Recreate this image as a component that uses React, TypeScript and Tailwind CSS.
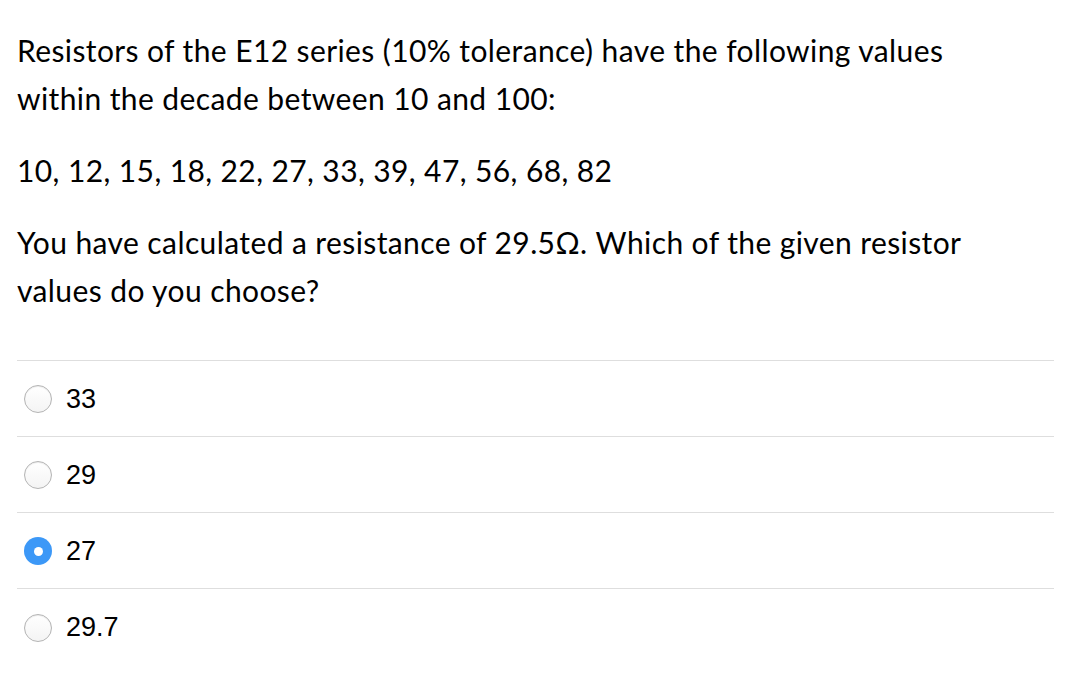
import React from 'react';

const options = [
  { label: '33', checked: false },
  { label: '29', checked: false },
  { label: '27', checked: true },
  { label: '29.7', checked: false },
];

function Radio({ checked }: { checked: boolean }) {
  if (checked) {
    return (
      <span className="flex h-[28px] w-[28px] items-center justify-center rounded-full bg-[#3c98f7]">
        <span className="h-[9px] w-[9px] rounded-full bg-white" />
      </span>
    );
  }
  return (
    <span className="h-[28px] w-[28px] rounded-full border border-[#b4b4b4] bg-gradient-to-b from-white to-[#f4f4f4] shadow-[inset_0_1px_1px_rgba(0,0,0,0.08)]" />
  );
}

export default function App() {
  return (
    <div className="min-h-screen bg-white px-[17px] pt-[26px] text-black">
      <div className="max-w-[1000px] font-['Lato',sans-serif] text-[30px] leading-[48px] tracking-[0.4px]">
        <p className="mb-[24px]">
          Resistors of the E12 series (10% tolerance) have the following values within the decade between 10 and 100:
        </p>
        <p className="mb-[24px]">10, 12, 15, 18, 22, 27, 33, 39, 47, 56, 68, 82</p>
        <p>
          You have calculated a resistance of 29.5Ω. Which of the given resistor values do you choose?
        </p>
      </div>

      <div className="mt-[46px] mr-[11px] border-t border-[#dedede]">
        {options.map((o) => (
          <div
            key={o.label}
            className="flex h-[76px] items-center gap-[14px] border-b border-[#dedede] pl-[7px] pt-[1px] last:border-b-0"
          >
            <Radio checked={o.checked} />
            <span className="font-['Liberation_Sans',Arial,sans-serif] text-[27px]">{o.label}</span>
          </div>
        ))}
      </div>
    </div>
  );
}
